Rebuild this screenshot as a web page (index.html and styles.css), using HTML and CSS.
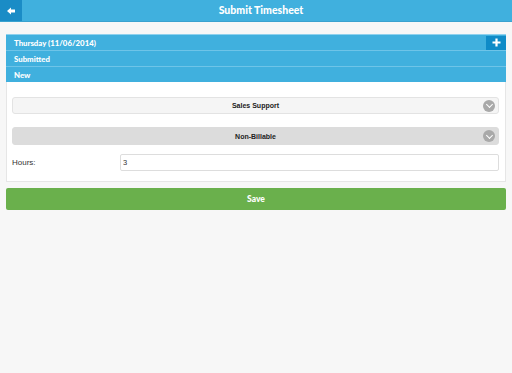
FILE: index.html
```html
<!DOCTYPE html>
<html lang="en">
<head>
  <meta charset="UTF-8">
  <title>Submit Timesheet</title>
  <link rel="stylesheet" href="styles.css">
</head>
<body>
  <header class="topbar">
    <a class="back-btn" href="#">
      <svg width="10" height="10" viewBox="0 0 10 10"><path d="M1 5 L5 1.5 L5 3.6 L9 3.6 L9 6.4 L5 6.4 L5 8.5 Z" fill="#fff"/></svg>
    </a>
    <h1 class="title">Submit Timesheet</h1>
  </header>

  <main class="content">
    <section class="panel">
      <div class="panel-row day-row">
        <span>Thursday (11/06/2014)</span>
        <button class="add-btn" type="button">
          <svg width="9" height="9" viewBox="0 0 9 9"><path d="M3.4 0.5h2.2v2.9h2.9v2.2H5.6v2.9H3.4V5.6H0.5V3.4h2.9z" fill="#fff"/></svg>
        </button>
      </div>
      <div class="panel-row">Submitted</div>
      <div class="panel-row">New</div>

      <div class="panel-body">
        <div class="select">
          <span>Sales Support</span>
          <i class="chevron"></i>
        </div>
        <div class="select select-dark">
          <span>Non-Billable</span>
          <i class="chevron"></i>
        </div>
        <div class="field">
          <label for="hours">Hours:</label>
          <input id="hours" type="text" value="3">
        </div>
      </div>
    </section>

    <button class="save-btn" type="button">Save</button>
  </main>
</body>
</html>
```

FILE: styles.css
```css
* {
  box-sizing: border-box;
}

body {
  margin: 0;
  padding: 0;
  background-color: #f7f7f7;
  font-family: "Liberation Sans", Arial, sans-serif;
  color: #333;
}

.topbar {
  display: flex;
  height: 22px;
  background-color: #40b0de;
  border-bottom: 1px solid #3aa2cf;
}

.back-btn {
  display: flex;
  align-items: center;
  justify-content: center;
  width: 22px;
  background-color: #1a8cc6;
}

.title {
  flex: 1;
  margin: 0;
  padding-right: 12px;
  text-align: center;
  color: #fff;
  font-family: Lato, sans-serif;
  font-size: 10.5px;
  font-weight: 900;
  line-height: 21px;
}

.content {
  padding: 12px 6px 0;
}

.panel {
  background-color: #fff;
}

.panel-row {
  display: flex;
  align-items: center;
  justify-content: space-between;
  height: 16px;
  padding: 0 0 0 8px;
  background-color: #40b0de;
  border-top: 1px solid #6ec4e8;
  color: #fff;
  font-family: Lato, sans-serif;
  font-size: 7.8px;
  font-weight: 900;
}

.day-row {
  border-top: 1px solid #8ed1ee;
}

.add-btn {
  display: flex;
  align-items: center;
  justify-content: center;
  width: 20px;
  height: 14px;
  padding: 0;
  border: none;
  background-color: #0f8bc7;
}

.panel-body {
  display: flex;
  flex-direction: column;
  padding: 15px 6px 10px 5px;
  border: 1px solid #e6e6e6;
  border-top: none;
}

.select {
  position: relative;
  height: 17px;
  display: flex;
  align-items: center;
  justify-content: center;
  background-color: #f5f5f5;
  border: 1px solid #e3e3e3;
  border-radius: 3px;
  font-size: 7px;
  font-weight: bold;
  color: #222;
}

.select-dark {
  height: 18px;
  margin: 13px 0 9px;
  background-color: #dcdcdc;
  border-color: #dcdcdc;
}

.chevron {
  position: absolute;
  right: 3px;
  top: 50%;
  width: 12px;
  height: 12px;
  margin-top: -6px;
  border-radius: 50%;
  background-color: #a9a9a9;
}

.chevron::after {
  content: "";
  position: absolute;
  left: 4px;
  top: 2.6px;
  width: 4px;
  height: 4px;
  border-right: 1.6px solid #fff;
  border-bottom: 1.6px solid #fff;
  transform: rotate(45deg);
}

.field {
  display: flex;
  align-items: center;
}

.field label {
  width: 108px;
  font-size: 8px;
  color: #333;
}

.field input {
  flex: 1;
  height: 17px;
  padding: 0 2px;
  border: 1px solid #ddd;
  border-radius: 2px;
  font-family: "Liberation Sans", Arial, sans-serif;
  font-size: 7.5px;
  color: #333;
}

.save-btn {
  display: block;
  width: 100%;
  height: 22px;
  margin-top: 6px;
  border: none;
  border-radius: 2px;
  background-color: #6ab04c;
  color: #fff;
  font-family: Lato, sans-serif;
  font-size: 8.5px;
  font-weight: 900;
}
```
